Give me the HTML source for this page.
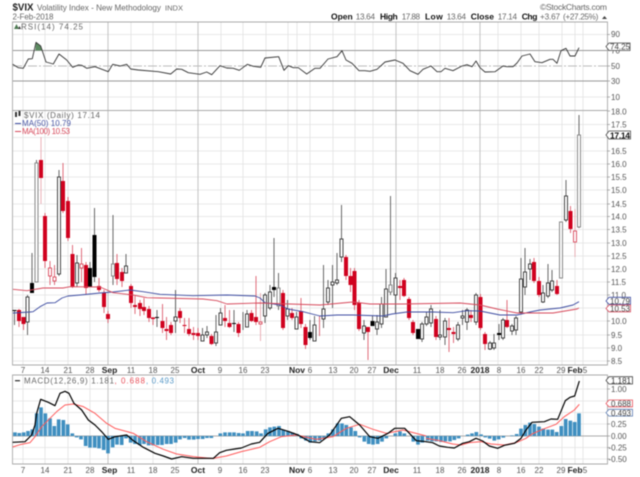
<!DOCTYPE html>
<html><head><meta charset="utf-8"><style>
html,body{margin:0;padding:0;background:#fff;width:640px;height:477px;overflow:hidden}
svg{display:block;filter:blur(.4px)}
text{font-family:"Liberation Sans",sans-serif}
.g{fill:#666;font-size:8px}
.b{fill:#111;font-size:8.5px;font-weight:bold}
.h{fill:#666;font-size:8.2px}
.l{fill:#555;font-size:8px}
.x{fill:#555;font-size:8px;text-anchor:middle}
.m{fill:#222;font-size:8.5px;font-weight:bold;text-anchor:middle}
.n{fill:none;stroke-linejoin:round}
</style></head><body>
<svg width="640" height="477" viewBox="0 0 640 477" xmlns="http://www.w3.org/2000/svg">
<rect width="640" height="477" fill="#fff"/>
<!-- header -->
<text x="12.5" y="10.5" font-size="10.5" font-weight="bold" fill="#222" textLength="21" lengthAdjust="spacingAndGlyphs">$VIX</text>
<text x="37" y="10.5" font-size="8.5" fill="#666" textLength="124" lengthAdjust="spacingAndGlyphs">Volatility Index - New Methodology</text>
<text x="165" y="10.5" font-size="7" fill="#666" textLength="18" lengthAdjust="spacingAndGlyphs">INDX</text>
<text x="12.5" y="19.5" font-size="8" fill="#666" textLength="41" lengthAdjust="spacing">2-Feb-2018</text>
<text x="540" y="10" font-size="8.5" fill="#666" textLength="67" lengthAdjust="spacing">©StockCharts.com</text>
<g>
<text class="b" x="331" y="19.5" textLength="21.7">Open</text><text class="h" x="355.7" y="19.5" textLength="19.3">13.64</text>
<text class="b" x="380" y="19.5" textLength="17.7">High</text><text class="h" x="401.7" y="19.5" textLength="18.3">17.88</text>
<text class="b" x="425" y="19.5" textLength="17.7">Low</text><text class="h" x="446.7" y="19.5" textLength="19.3">13.64</text>
<text class="b" x="470.7" y="19.5" textLength="23.3">Close</text><text class="h" x="497.7" y="19.5" textLength="19.3">17.14</text>
<text class="b" x="521.7" y="19.5" textLength="15.7">Chg</text><text class="h" x="540" y="19.5" textLength="20">+3.67</text>
<text class="h" x="563" y="19.5" textLength="35.3">(+27.25%)</text>
<path d="M602 19h5l-2.5-3z" fill="#444"/>
</g>

<!-- grid -->
<path fill="none" stroke="#e2e2e2" stroke-width=".8" d="M23 22V365M45 22V365M68 22V365M90 22V365M131 22V365M153 22V365M176 22V365M221 22V365M243 22V365M266 22V365M288 22V365M297 22V365M310 22V365M333 22V365M355 22V365M373 22V365M418 22V365M440 22V365M463 22V365M498 22V365M521 22V365M539 22V365M562 22V365M575 22V365M583 22V365
M23 375V464M45 375V464M68 375V464M90 375V464M131 375V464M153 375V464M176 375V464M221 375V464M243 375V464M266 375V464M288 375V464M297 375V464M310 375V464M333 375V464M355 375V464M373 375V464M418 375V464M440 375V464M463 375V464M498 375V464M521 375V464M539 375V464M562 375V464M575 375V464M583 375V464
M13 34.5H607M13 97H607
M13 124.5H607M13 137.5H607M13 151H607M13 164H607M13 177H607M13 190H607M13 204H607M13 216.5H607M13 229.5H607M13 243H607M13 256H607M13 269H607M13 282H607M13 295H607M13 308H607M13 321H607M13 335H607M13 348H607M13 361H607
M13 389H607M13 401H607M13 412.5H607M13 424H607M13 447.5H607M13 459H607"/>
<path fill="none" stroke="#bdbdbd" stroke-width=".9" d="M108 22V365M198 22V365M396 22V365M480 22V365M108 375V464M198 375V464M396 375V464M480 375V464"/>
<path fill="none" stroke="#aaa" stroke-width=".9" d="M12.5 22H607.5V365H12.5ZM12.5 110.5H607.5M12.5 375H607.5V464H12.5ZM13 436H607"/>
<path fill="none" stroke="#999" stroke-width=".9" d="M13 50.5H607M13 81H607"/>
<path fill="none" stroke="#bbb" stroke-width=".9" stroke-dasharray="9 2 2 2" d="M13 66H607"/>
<path fill="none" stroke="#999" stroke-width=".7" d="M607 34.5h3M607 50.5h3M607 66h3M607 81h3M607 97h3M607 111h3M607 124.5h3M607 137.5h3M607 151h3M607 164h3M607 177h3M607 190h3M607 204h3M607 216.5h3M607 229.5h3M607 243h3M607 256h3M607 269h3M607 282h3M607 295h3M607 308h3M607 321h3M607 335h3M607 348h3M607 361h3M607 389h3M607 401h3M607 412.5h3M607 424h3M607 436h3M607 447.5h3M607 459h3"/>

<!-- RSI -->
<path d="M35.3 50.5L36 42.3L40.7 46L42.5 50.5Z" fill="#5b8a5f"/>
<polyline class="n" stroke="#333" stroke-width=".9" points="12.7,64.3 18.3,67.7 23.3,68.3 28.3,59 32.3,58.7 36,42.3 40.7,46 46,62 53.3,64 59,54 66.7,60 72.7,67.3 78.3,65 81.7,65.3 86.7,68.3 95,66.7 108.3,71.7 112.7,64.3 120,66 126.7,64.3 130.7,69 138.3,70 158.3,71.7 170.7,74 176.7,69 181.7,69.3 188.3,72.7 200,74.3 206.7,72 211.7,74.7 220,65.7 226.7,68 233.3,68.3 239.3,70.3 247.3,64.3 253.3,66.3 260.7,67.3 265,58 278.7,56.7 284,70.3 288.3,65.7 293.3,67.7 298.3,67.7 306.7,74 315,68.3 320,68.3 328,59 337,56.7 342,50.7 346,60 352,63.3 359,70.7 365,70.7 370,71.3 377,69.3 385,62 395,60 403,63.3 410,70.7 418,74.3 423,69.3 431,66 437,71.7 441,71.7 445,68.3 453,70.7 462,66 467,64.7 472,66.7 476,61 480,67.7 485,72 495,71.7 503,66 507,66.7 513,66.7 517,63 522,56 530,54 535,61.7 542,62.7 550,59.3 553,59.3 557,63.3 561,50.7 566,48.3 570,56 575,56 579,47.7"/>
<path d="M14 29l2.5-5 2.5 5z" fill="#4d7a52"/><path d="M18 29l1.5-3 1.5 3z" fill="#333"/>
<text class="g" x="21" y="29.5" textLength="62" lengthAdjust="spacing">RSI(14) 74.25</text>

<!-- wicks -->
<path fill="none" stroke="#e8a9b0" stroke-width=".9" d="M41 137V204M260.5 293V341M575 209V257"/>
<path fill="none" stroke="#d9485a" stroke-width=".8" d="M19 309V327M23.5 317V330M45 213V268M50 261V285M54.5 265V285M63 163V213M68 197V241M72.5 245V288M81.5 248V282M86 262V294M99 278V292M104 290V313M108 311V323M117 254V285M122 268V287M131 284V308M135 296V314M140 300V316M144 298V315M149 306V322M153 317V325M162.5 304V333M166.5 317V340M171 322V335M180 308V323M184.5 318V333M189 318V336M193.5 327V340M198 328V340M211.5 334V345M225 305V327M229.5 310V328M238.5 322V337M251.5 310V322M256 276V325M283 290V330M292 308V320M301 298V328M305.5 324V349M319.5 316V336M346 255V280M350.5 268V292M354.5 268V310M359 300V331M368 327V360M400 280V300M404 278V297M409 297V320M413 320V335M436 316V340M449 318V352M453.5 327V343M471 310V322M480.5 294V330M485 332V350M507 300V328M534 258V283M539 277V297M557 280V295M570.5 206V233"/>
<path fill="none" stroke="#444" stroke-width=".8" d="M14.5 310V325M27.5 295V335M32 253V293M36.5 160V282M59 170V276M77 255V287M90 262V287M94.5 208V282M113 215V285M126 254V273M157 310V327M175.5 290V333M202.5 328V341M207 326V338M216 315V346M220.5 308V325M234 310V332M243 312V330M247 310V327M265 293V323M270 285V310M274 238V297M278.5 273V310M287.5 300V320M296.5 312V329M310 320V340M314.5 316V341M323.5 265V328M328 280V305M332.5 265V308M337 253V285M341.5 205V262M364 320V340M372.5 316V326M377 315V335M381.5 297V328M386 269V317M390.5 196V295M395.5 273V313M418 329V339M422 322V342M426.5 312V326M431 305V327M440 310V340M445 318V345M458 322V341M462.5 310V325M467 308V330M476 293V325M490 341V350M494 334V350M499 324V340M503 318V340M512 324V335M516 316V335M521 258V313M525 248V295M530 259V280M543 285V303M548 264V298M552 270V292M561 222V278M566 180V222M579 115V228"/>

<!-- filled bodies -->
<path fill="none" stroke="#d0021f" stroke-width="4" d="M19 310V321M23.5 317V324M41 160V178M45 216V261M63 181V211M68 201V238M72.5 254V287M86 265V288M99 286V290M104 293V307M108 314V319M117 263V279M122 272V281M131 286V303M135 305V307M140 303V309M144 307V311M149 309V318M153 317.5V319M162.5 321V328M166.5 329V331M171 325V333M180 311V318M184.5 325V326M189 329V334M193.5 333V335M198 333V336M211.5 336V344M225 318V321M229.5 323V327M238.5 324V333M251.5 313V321M256 317V322M283 293V328M292 313V318M301 311V324M305.5 327V345M346 257V276M350.5 276V285M354.5 271V305M359 303V329M368 327V332M400 286V288M404 280V296M409 299V318M413 322V333M436 319V337M449 328V330M453.5 332V334M471 315V318M480.5 297V328M485 334V344M507 320V327M534 262V281M539 281V295M557 286V294M570.5 211V229"/>
<path fill="none" stroke="#000" stroke-width="4" d="M14.5 310V311M32 283V293M90 268V287M94.5 235V277M157 317V318M234 323V324M274 287V290M310 332V338M372.5 321V326M418 329V339M499 333V335"/>

<!-- hollow bodies -->
<g fill="#fff" stroke="#888" stroke-width="1">
<rect x="35" y="163" width="3" height="119"/><rect x="111.5" y="264" width="3" height="12"/><rect x="277" y="288" width="3" height="18"/><rect x="389" y="285" width="3" height="7"/><rect x="559.5" y="222" width="3" height="56"/><rect x="577.5" y="135" width="3" height="92"/>
</g>
<g fill="#fff" stroke="#333" stroke-width=".9">
<rect x="26" y="297" width="3" height="25"/><rect x="57.5" y="177" width="3" height="97"/><rect x="75.5" y="263" width="3" height="20"/><rect x="124.5" y="266" width="3" height="7"/><rect x="174" y="317" width="3" height="4"/><rect x="201" y="335" width="3" height="6"/><rect x="205.5" y="332" width="3" height="3"/><rect x="214.5" y="332" width="3" height="11"/><rect x="219" y="313" width="3" height="12"/><rect x="245.5" y="314" width="3" height="13"/><rect x="263.5" y="295" width="3" height="21"/><rect x="268.5" y="292" width="3" height="16"/><rect x="286" y="309" width="3" height="7"/><rect x="295" y="317" width="3" height="12"/><rect x="313" y="325" width="3" height="16"/><rect x="322" y="309" width="3" height="10"/><rect x="326.5" y="288" width="3" height="14"/><rect x="331" y="282" width="3" height="3"/><rect x="335.5" y="280" width="3" height="3"/><rect x="340" y="239" width="3" height="18"/><rect x="362.5" y="326" width="3" height="7"/><rect x="375.5" y="322" width="3" height="7"/><rect x="380" y="304" width="3" height="20"/><rect x="384.5" y="289" width="3" height="28"/><rect x="394" y="278" width="3" height="17"/><rect x="420.5" y="324" width="3" height="15"/><rect x="425" y="317" width="3" height="7"/><rect x="429.5" y="309" width="3" height="14"/><rect x="438.5" y="335" width="3" height="2"/><rect x="443.5" y="321" width="3" height="16"/><rect x="456.5" y="325" width="3" height="14"/><rect x="461" y="316" width="3" height="2"/><rect x="465.5" y="310" width="3" height="12"/><rect x="474.5" y="295" width="3" height="27"/><rect x="488.5" y="343" width="3" height="6"/><rect x="492.5" y="343" width="3" height="5"/><rect x="501.5" y="320" width="3" height="18"/><rect x="510.5" y="326" width="3" height="5"/><rect x="514.5" y="318" width="3" height="12"/><rect x="519.5" y="279" width="3" height="33"/><rect x="523.5" y="272" width="3" height="15"/><rect x="528.5" y="264" width="3" height="5"/><rect x="541.5" y="293" width="3" height="9"/><rect x="546.5" y="283" width="3" height="13"/><rect x="550.5" y="281" width="3" height="9"/><rect x="564.5" y="196" width="3" height="24"/>
</g>
<g fill="#fff" stroke="#d94a5c" stroke-width=".9">
<rect x="48.5" y="268" width="3" height="8"/><rect x="53" y="277" width="3" height="4"/><rect x="80" y="264" width="3" height="4"/><rect x="259" y="322" width="3" height="2"/><rect x="573.5" y="231" width="3" height="11"/>
</g>

<!-- MAs -->
<polyline class="n" stroke="#3b4aa0" stroke-width=".9" points="13,313 30,312 33,311.7 40,306.7 47,303 55,302.7 62,298 68,296 80,295 100,293 113,292 130,290 143,291.7 160,294.3 193,295.7 227,295 255,296 260,298 265,302.7 280,305 288,309 303,311.7 320,316 337,315 353,315 383,316 392,314 407,312 433,312 453,312.7 467,310.7 480,311 500,315 517,315 530,312 540,310 560,308 573,305 579,301.7"/>
<polyline class="n" stroke="#d6485a" stroke-width=".9" points="13,289.3 27,290.7 43,288 63,288 70,286.7 100,287 113,292.7 133,295 147,297.7 160,298 203,299 217,300.7 227,304 260,303 320,305 353,302 370,304 403,304 460,303 480,305 497,309 517,313 537,313 553,313 577,309 579,308"/>
<path d="M15 123.5h6" stroke="#3b4aa0" stroke-width="1"/><path d="M15 131.5h6" stroke="#d6485a" stroke-width="1"/>
<path d="M15 112h2v5h-2zM18.5 111h2v5h-2z" fill="#333"/>
<text class="g" x="24" y="118" textLength="76" lengthAdjust="spacing">$VIX (Daily) 17.14</text>
<text x="22" y="126" font-size="8" fill="#4a57a5" textLength="49">MA(50) 10.79</text>
<text x="22" y="134" font-size="8" fill="#d6485a" textLength="48">MA(100) 10.53</text>

<!-- MACD bars -->
<g transform="translate(0,370) scale(.33333)">
<path fill="none" stroke="#3f8fc0" stroke-width="11" d="M45 198V187M58 198V189M71 198V187M84 198V183M97 198V178M110 198V130M123 198V112M136 198V130M150 198V145M163 198V168M176 198V148M190 198V150M203 198V163M217 198V190M230 198V202M243 198V208M257 198V228M270 198V233M284 198V233M297 198V235M311 198V240M324 198V250M338 198V232M351 198V224M365 198V225M378 198V205M392 198V218M405 198V222M419 198V225M432 198V222M446 198V226M459 198V226M473 198V225M486 198V225M500 198V222M513 198V222M527 198V218M540 198V208M554 198V204M567 198V209M581 198V209M594 198V207M608 198V207M621 198V204M634 198V204"/>
</g>
<g transform="translate(213,370) scale(.33333)">
<path fill="none" stroke="#3f8fc0" stroke-width="11" d="M22 198V190M36 198V187M50 198V187M63 198V187M77 198V189M90 198V190M104 198V183M117 198V183M131 198V184M144 198V190M158 198V178M171 198V172M184 198V170M198 198V168M211 198V180M225 198V183M238 198V188M252 198V192M265 198V205M279 198V212M292 198V218M306 198V214M320 198V212M333 198V207M346 198V190M360 198V178M374 198V160M387 198V160M400 198V165M414 198V172M427 198V183M440 198V202M454 198V215M467 198V222M480 198V224M494 198V222M507 198V215M520 198V205M547 198V190M561 198V184M574 198V190M601 198V215M615 198V224M628 198V218"/>
<polyline class="n" stroke="#ff5a5a" stroke-width="3" points="0,265 40,258 85,245 140,232 170,215 205,200 250,195 310,208 360,200 400,175 440,163 480,178 520,190 570,180 640,198"/>
<polyline class="n" stroke="#000" stroke-width="3.6" points="0,266 20,248 40,241 65,237 85,234 115,222 140,217 165,190 195,175 225,184 255,195 290,215 320,218 350,195 385,145 410,140 440,165 470,200 495,205 525,190 545,175 575,175 610,212 640,215"/>
</g>
<g transform="translate(426,370) scale(.33333)">
<path fill="none" stroke="#3f8fc0" stroke-width="11" d="M5 198V212M18 198V214M31 198V214M45 198V216M58 198V214M72 198V214M85 198V210M98 198V205M125 198V194M138 198V190M151 198V186M165 198V193M178 198V202M191 198V206M205 198V212M218 198V208M232 198V203M258 198V196M272 198V192M285 198V176M298 198V165M312 198V158M325 198V162M339 198V170M352 198V176M366 198V179M379 198V179M392 198V186M406 198V168M419 198V147M433 198V152M446 198V156M459 198V130"/>
<polyline class="n" stroke="#ff5a5a" stroke-width="3" points="0,205 40,212 80,222 105,225 130,218 165,215 195,222 235,225 270,218 300,205 318,192 350,178 390,163 415,140 445,120 460,103"/>
<polyline class="n" stroke="#000" stroke-width="3.6" points="0,215 20,218 40,228 65,232 85,234 110,220 130,215 150,205 170,213 190,228 215,235 235,226 265,220 285,205 300,180 318,157 355,155 375,147 395,148 418,92 432,82 446,78 460,33"/>
</g>
<g transform="translate(0,370) scale(.33333)">
<polyline class="n" stroke="#ff5a5a" stroke-width="3" points="38,231 60,224 90,218 105,200 125,170 150,145 170,125 195,105 220,102 250,110 285,130 320,160 345,175 400,190 440,215 490,238 530,252 580,260 640,266"/>
<polyline class="n" stroke="#000" stroke-width="3.6" points="38,217 75,215 95,195 105,165 110,130 122,88 145,97 165,107 180,70 195,64 207,70 222,100 245,120 265,150 285,165 305,185 325,208 345,200 380,195 400,212 430,232 465,250 490,258 515,267 545,260 580,265 610,265 640,265"/>
</g>
<path d="M15 380.7h5" stroke="#000" stroke-width="1"/>
<text class="g" x="24" y="383.5" textLength="90" lengthAdjust="spacing">MACD(12,26,9) 1.181</text>
<text x="114.5" y="383.5" font-size="8" fill="#e8505a" textLength="30.5" lengthAdjust="spacing">, 0.688</text>
<text x="146" y="383.5" font-size="8" fill="#5a9ac8" textLength="28" lengthAdjust="spacing">, 0.493</text>

<!-- x labels -->
<g>
<text class="x" x="23" y="373">7</text><text class="x" x="45" y="373">14</text><text class="x" x="68" y="373">21</text><text class="x" x="90" y="373">28</text><text class="m" x="109.500" y="373">Sep</text><text class="x" x="131" y="373">11</text><text class="x" x="153" y="373">18</text><text class="x" x="175" y="373">25</text><text class="m" x="198" y="373">Oct</text><text class="x" x="220" y="373">9</text><text class="x" x="243" y="373">16</text><text class="x" x="265" y="373">23</text><text class="m" x="297" y="373">Nov</text><text class="x" x="310" y="373">6</text><text class="x" x="333" y="373">13</text><text class="x" x="354" y="373">20</text><text class="x" x="372" y="373">27</text><text class="m" x="391" y="373">Dec</text><text class="x" x="417" y="373">11</text><text class="x" x="440" y="373">18</text><text class="x" x="462" y="373">26</text><text class="m" x="480" y="373">2018</text><text class="x" x="499" y="373">8</text><text class="x" x="521" y="373">16</text><text class="x" x="539" y="373">22</text><text class="x" x="561" y="373">29</text><text class="m" x="575" y="373">Feb</text><text class="x" x="585" y="373">5</text>
<text class="x" x="23" y="473">7</text><text class="x" x="45" y="473">14</text><text class="x" x="68" y="473">21</text><text class="x" x="90" y="473">28</text><text class="m" x="109.500" y="473">Sep</text><text class="x" x="131" y="473">11</text><text class="x" x="153" y="473">18</text><text class="x" x="175" y="473">25</text><text class="m" x="198" y="473">Oct</text><text class="x" x="220" y="473">9</text><text class="x" x="243" y="473">16</text><text class="x" x="265" y="473">23</text><text class="m" x="297" y="473">Nov</text><text class="x" x="310" y="473">6</text><text class="x" x="333" y="473">13</text><text class="x" x="354" y="473">20</text><text class="x" x="372" y="473">27</text><text class="m" x="391" y="473">Dec</text><text class="x" x="417" y="473">11</text><text class="x" x="440" y="473">18</text><text class="x" x="462" y="473">26</text><text class="m" x="480" y="473">2018</text><text class="x" x="499" y="473">8</text><text class="x" x="521" y="473">16</text><text class="x" x="539" y="473">22</text><text class="x" x="561" y="473">29</text><text class="m" x="575" y="473">Feb</text><text class="x" x="585" y="473">5</text>
</g>

<!-- y labels -->
<g>
<text class="l" x="611" y="37">90</text><text class="l" x="611" y="53.500">70</text><text class="l" x="611" y="69">50</text><text class="l" x="611" y="84">30</text><text class="l" x="611" y="100">10</text>
<text class="l" x="611" y="114.500">18.0</text><text class="l" x="611" y="127.500">17.5</text><text class="l" x="611" y="154">16.5</text><text class="l" x="611" y="167">16.0</text><text class="l" x="611" y="180">15.5</text><text class="l" x="611" y="193">15.0</text><text class="l" x="611" y="207">14.5</text><text class="l" x="611" y="219.500">14.0</text><text class="l" x="611" y="232.500">13.5</text><text class="l" x="611" y="246">13.0</text><text class="l" x="611" y="259">12.5</text><text class="l" x="611" y="272">12.0</text><text class="l" x="611" y="285">11.5</text><text class="l" x="611" y="298">11.0</text><text class="l" x="611" y="324">10.0</text><text class="l" x="611" y="338">9.5</text><text class="l" x="611" y="351">9.0</text><text class="l" x="611" y="364">8.5</text>
<text class="l" x="611" y="392">1.00</text><text class="l" x="611" y="427">0.25</text><text class="l" x="611" y="439">0.00</text><text class="l" x="608.500" y="450.500">-0.25</text><text class="l" x="608.500" y="462">-0.50</text>
</g>

<!-- tags -->
<g stroke-width=".8" fill="#fff">
<path d="M606 46.500l3-3.500h21v7.500h-21z" stroke="#444"/>
<path d="M606 135l3-4h21.500v8h-21.500z" stroke="#444"/>
<path d="M606 301l3-3.700h21.500v7h-21.500z" stroke="#3b4aa0"/>
<path d="M606 308.500l3-3.500h21.500v6.800h-21.500z" stroke="#d6485a"/>
<path d="M606 380.500l3-3.800h23.500v7.300h-23.500z" stroke="#444"/>
<path d="M606 403.500l3-3.500h23.500v6.800h-23.500z" stroke="#e8505a"/>
<path d="M606 412.800l3-3.500h23.500v6.800h-23.500z" stroke="#5a7ab0"/>
</g>
<text x="610" y="49.700" font-size="8" fill="#444" textLength="20">74.25</text>
<text x="610" y="138.500" font-size="8.500" font-weight="bold" fill="#111" textLength="20">17.14</text>
<text x="610" y="304" font-size="8" fill="#444" textLength="20">10.79</text>
<text x="610" y="311.500" font-size="8" fill="#444" textLength="20">10.53</text>
<text x="611" y="383.500" font-size="8" fill="#333" textLength="20">1.181</text>
<text x="611" y="406.500" font-size="8" fill="#444" textLength="20">0.688</text>
<text x="611" y="415.800" font-size="8" fill="#444" textLength="20">0.493</text>
</svg>
</body></html>
